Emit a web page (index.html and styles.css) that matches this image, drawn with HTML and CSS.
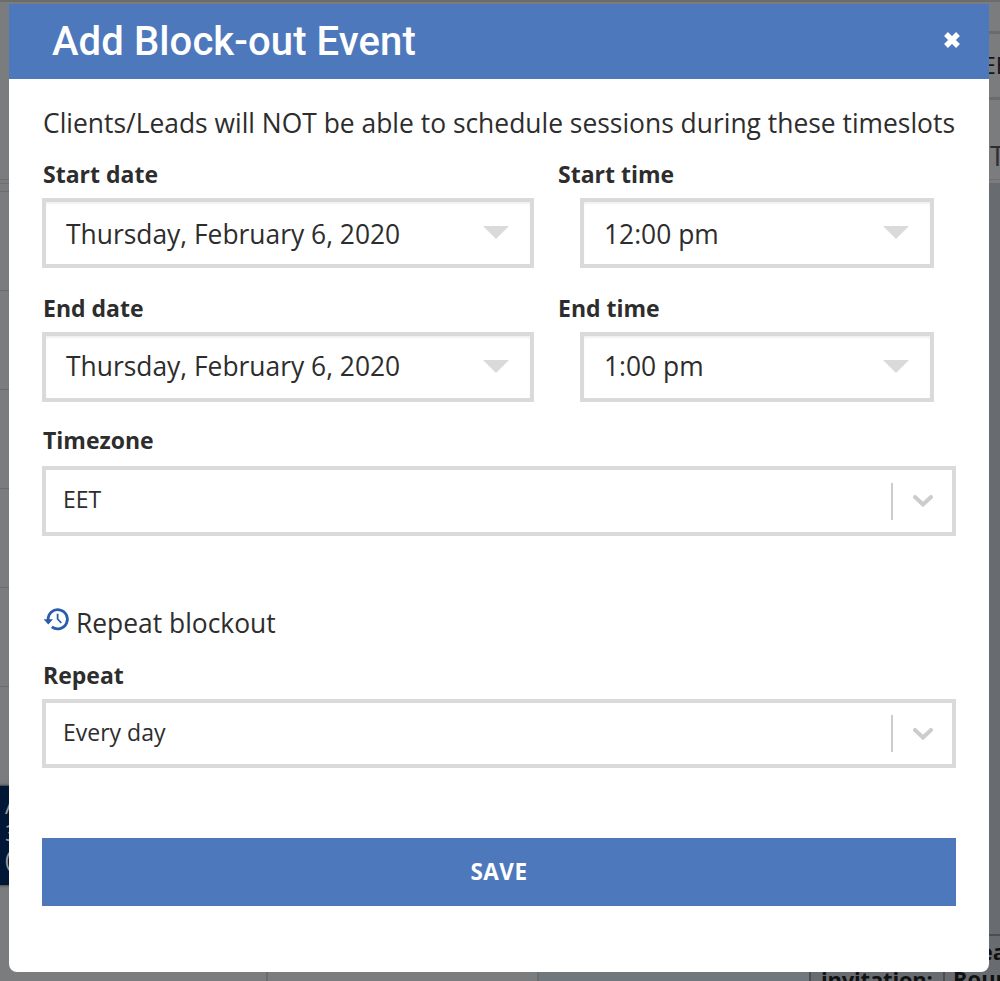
FILE: index.html
```html
<!DOCTYPE html>
<html lang="en">
<head>
  <meta charset="utf-8">
  <title>Add Block-out Event</title>
  <link rel="stylesheet" href="styles.css">
</head>
<body>
  <div class="page">
    <div class="toolbar">
      <div class="toolbar-blank"></div>
      <div class="toolbar-zone">EET</div>
      <div class="toolbar-day">Thu</div>
    </div>
    <div class="calendar">
      <div class="day">
        <div class="slot"></div>
        <div class="slot"></div>
        <div class="slot"></div>
        <div class="slot"></div>
        <div class="slot"></div>
        <div class="slot"></div>
        <div class="slot"></div>
        <div class="slot"></div>
        <div class="event event-navy">A<br>3<br>(</div>
      </div>
      <div class="day"></div>
      <div class="day today"></div>
      <div class="day today busy">
        <div class="event event-invite">invitation:</div>
        <div class="event event-round"><span>Team</span><br>Round</div>
      </div>
    </div>
  </div>

  <div class="modal">
    <div class="modal-header">
      <h1>Add Block-out Event</h1>
      <button type="button" class="close" aria-label="Close">
        <svg width="18" height="18" viewBox="0 0 18 18"><path d="M3 3L15 15M15 3L3 15"/></svg>
      </button>
    </div>
    <form class="modal-body">
      <p class="intro">Clients/Leads will NOT be able to schedule sessions during these timeslots</p>

      <div class="form-row">
        <div class="form-group">
          <label>Start date</label>
          <div class="picker"><span>Thursday, February 6, 2020</span><i class="caret"></i></div>
        </div>
        <div class="form-group time">
          <label>Start time</label>
          <div class="picker"><span>12:00 pm</span><i class="caret"></i></div>
        </div>
      </div>

      <div class="form-row end-row">
        <div class="form-group">
          <label>End date</label>
          <div class="picker"><span>Thursday, February 6, 2020</span><i class="caret"></i></div>
        </div>
        <div class="form-group time">
          <label>End time</label>
          <div class="picker"><span>1:00 pm</span><i class="caret"></i></div>
        </div>
      </div>

      <div class="form-group timezone">
        <label>Timezone</label>
        <div class="select">
          <span>EET</span>
          <svg class="chevron" width="20" height="12" viewBox="0 0 20 12"><path d="M2 2L10 9.5L18 2"/></svg>
        </div>
      </div>

      <div class="repeat-title">
        <svg class="history" width="25" height="23" viewBox="0 0 25 23">
          <path class="ring" d="M4.2 12.2A9.6 9.6 0 1 1 7.8 18.8"/>
          <path class="head" d="M-0.4 11.2H9L4.3 16.6Z"/>
          <path class="hands" d="M13.6 5.8V11L17.3 15"/>
        </svg>
        <span>Repeat blockout</span>
      </div>

      <div class="form-group repeat">
        <label>Repeat</label>
        <div class="select">
          <span>Every day</span>
          <svg class="chevron" width="20" height="12" viewBox="0 0 20 12"><path d="M2 2L10 9.5L18 2"/></svg>
        </div>
      </div>

      <button type="button" class="save">SAVE</button>
    </form>
  </div>
</body>
</html>
```

FILE: styles.css
```css
* {
  box-sizing: border-box;
}

body {
  margin: 0;
  font-family: "Open Sans", sans-serif;
  color: #2d2d2d;
  height: 981px;
  overflow: hidden;
  background: #7b7c7e;
}

/* dimmed calendar behind the dialog */
.page {
  position: absolute;
  top: 0;
  left: 0;
  width: 1000px;
  height: 981px;
  overflow: hidden;
  border-top: 2px solid #6c6c6c;
}

.toolbar {
  height: 190px;
  padding-left: 976px;
  border-bottom: 1px solid #6b6b6c;
  background: linear-gradient(#6f6f70, #6f6f70) 0 177px / 100% 1px no-repeat,
    linear-gradient(#6f6f70, #6f6f70) 0 181px / 100% 1px no-repeat;
  font-size: 23px;
  white-space: nowrap;
}

.toolbar-blank {
  height: 32px;
  border-bottom: 3px solid #6b6b6b;
}

.toolbar-zone {
  height: 66px;
  line-height: 63px;
  padding-left: 7px;
  color: #161616;
  border-bottom: 3px solid #6b6b6b;
}

.toolbar-day {
  height: 81px;
  line-height: 111px;
  padding-left: 14px;
  font-size: 27px;
}

.calendar {
  display: grid;
  grid-template-columns: 268px 271px 270px 191px;
  height: 789px;
}

.day {
  position: relative;
  border-right: 2px solid #6b6c6e;
}

.today {
  background: #70787d;
  border-right: 0;
}

.busy {
  background: #686c70;
  margin-top: -9px;
}

.slot {
  height: 99px;
  border-bottom: 1px solid #6a6b6d;
}

.event {
  position: absolute;
  font-size: 22px;
  font-weight: bold;
  color: #101112;
}

.event-navy {
  top: 594px;
  left: -4px;
  width: 200px;
  height: 99px;
  padding: 6px 0 0 9px;
  font-weight: normal;
  line-height: 27px;
  color: #9a9a9a;
  background: #021735;
  box-shadow: 0 0 3px #222;
}

.event-invite {
  top: 751px;
  left: 0;
  width: 134px;
  height: 60px;
  padding: 30px 0 0 10px;
  line-height: 30px;
  letter-spacing: -0.2px;
  border-left: 2px solid #4b4e51;
}

.event-round {
  top: 751px;
  left: 134px;
  width: 100px;
  height: 60px;
  padding: 2px 0 0 8px;
  line-height: 27px;
  border: 2px solid #4b4e51;
}

.event-round span {
  padding-left: 14px;
}

/* dialog */
.modal {
  position: absolute;
  top: 4px;
  left: 9px;
  width: 980px;
  height: 968px;
  background: #fff;
  border-radius: 0 0 8px 8px;
}

.modal-header {
  display: flex;
  justify-content: space-between;
  align-items: center;
  height: 75px;
  padding: 0 28px 0 43px;
  background: #4d78bb;
  color: #fff;
}

.modal-header h1 {
  margin: 0;
  font-family: Roboto, sans-serif;
  font-size: 40px;
  font-weight: 500;
  letter-spacing: 0.1px;
  line-height: 75px;
}

.close {
  display: flex;
  margin-bottom: 3px;
  padding: 0;
  border: 0;
  background: none;
}

.close path {
  fill: none;
  stroke: #fff;
  stroke-width: 5.4;
}

.modal-body {
  padding: 26px 33px 0;
}

.intro {
  margin: 0 0 18px 1px;
  font-size: 26.42px;
  line-height: 36px;
  white-space: nowrap;
}

.form-row {
  display: flex;
  gap: 24px;
}

.form-row .form-group {
  width: 492px;
}

.form-row .time {
  width: 376px;
}

.time .picker {
  margin-left: 22px;
}

.end-row {
  margin-top: 25px;
}

label {
  display: block;
  margin: 0 0 9px 1px;
  font-size: 23px;
  font-weight: bold;
  line-height: 30px;
}

.time label {
  margin-left: 0;
}

.picker,
.select {
  display: flex;
  align-items: center;
  justify-content: space-between;
  height: 70px;
  border: 4px solid #dadada;
}

.picker {
  padding: 0 21px 0 20px;
  font-size: 26.4px;
  box-shadow: inset 0 2px 2px #f1f1f1;
}

.picker span {
  padding-top: 2px;
}

.end-row .picker span {
  padding: 0 0 2px;
}

.caret {
  border: 13px solid transparent;
  border-top-color: #dadada;
  border-bottom: 0;
  margin-bottom: 2px;
}

.timezone {
  margin-top: 23px;
}

.timezone label {
  margin-bottom: 11px;
}

.select {
  padding: 0 19px 0 17px;
  font-size: 23px;
}

.select span {
  flex: 1;
  padding-bottom: 4px;
}

.select::after {
  content: "";
  order: 1;
  width: 2px;
  height: 37px;
  margin-right: 20px;
  background: #ccc;
}

.chevron {
  order: 2;
}

.chevron path {
  fill: none;
  stroke: #ccc;
  stroke-width: 4;
  stroke-linecap: round;
}

.repeat-title {
  display: flex;
  gap: 7px;
  margin-top: 69px;
  padding-left: 2px;
  font-size: 26.4px;
  line-height: 36px;
}

.history {
  margin-top: 3px;
  overflow: visible;
}

.history path {
  fill: none;
  stroke: #2a5caa;
}

.history .ring {
  stroke-width: 2.8;
}

.history .head {
  fill: #2a5caa;
  stroke: none;
}

.history .hands {
  stroke-width: 1.8;
}

.repeat {
  margin-top: 19px;
}

.repeat .select {
  height: 69px;
}

.save {
  display: block;
  width: 100%;
  height: 68px;
  margin-top: 70px;
  padding-bottom: 3px;
  border: 0;
  background: #4d78bb;
  color: #fff;
  font-family: inherit;
  font-size: 22.5px;
  font-weight: bold;
  letter-spacing: 0.5px;
}
```
